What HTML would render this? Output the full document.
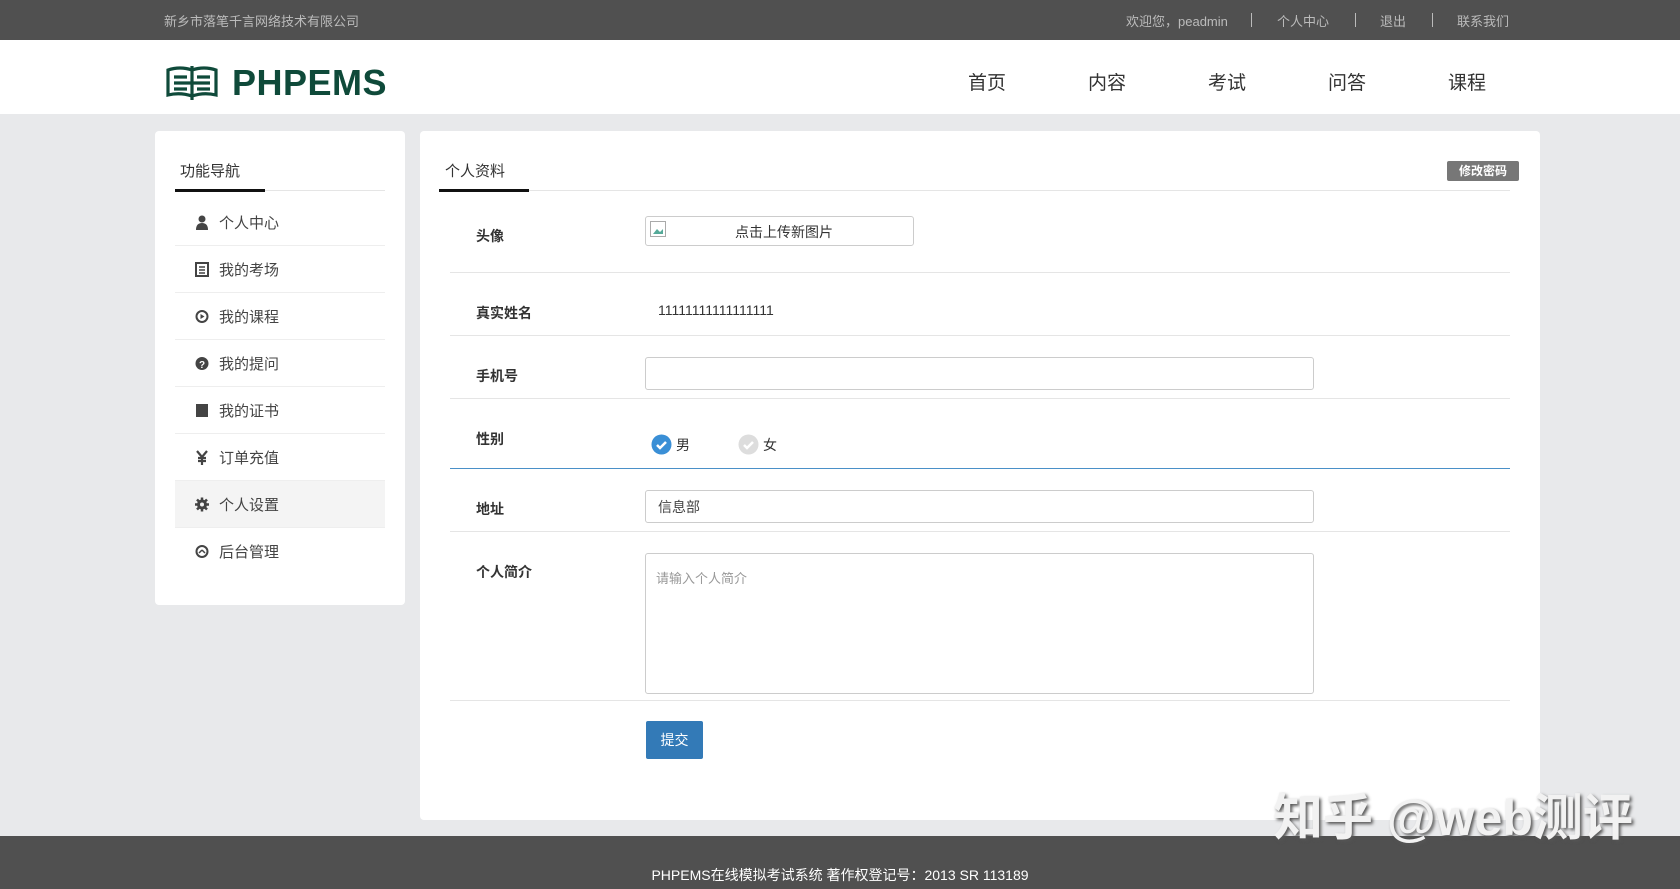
<!DOCTYPE html>
<html><head><meta charset="utf-8"><style>
*{margin:0;padding:0;box-sizing:border-box}
body{width:1680px;height:889px;background:#e8e9eb;font-family:"Liberation Sans","Noto Sans CJK SC",sans-serif;position:relative;overflow:hidden;color:#333}
.a{position:absolute}
.top{left:0;top:0;width:1680px;height:40px;background:#505050;color:#bbb;font-size:13px}
.top span{position:absolute;top:11px}
.sep{position:absolute;top:13px;width:1px;height:14px;background:#bbb}
.hdr{left:0;top:40px;width:1680px;height:74px;background:#fff}
.nav{position:absolute;top:28px;font-size:19px;color:#333;transform:translateX(-50%)}
.panel{background:#fff;border-radius:4px}
.mi{position:absolute;left:175px;width:210px;height:47px;border-bottom:1px solid #eee;font-size:15px;color:#444}
.mi svg{position:absolute;left:20px;top:16px}
.mi span{position:absolute;left:44px;top:13px}
.lbl{position:absolute;left:476px;font-size:14px;font-weight:bold;color:#333}
.hr{position:absolute;left:450px;width:1060px;height:1px;background:#e5e5e5}
.inp{position:absolute;left:645px;width:669px;height:33px;border:1px solid #ccc;border-radius:3px;background:#fff;font-size:14px}
</style></head><body>
<div class="a top">
<span style="left:164px">新乡市落笔千言网络技术有限公司</span>
<span style="left:1126px">欢迎您，peadmin</span><div class="sep" style="left:1251px"></div>
<span style="left:1277px">个人中心</span><div class="sep" style="left:1355px"></div>
<span style="left:1380px">退出</span><div class="sep" style="left:1432px"></div>
<span style="left:1457px">联系我们</span>
</div>
<div class="a hdr">
<svg class="a" style="left:166px;top:25px" width="52" height="35" viewBox="0 0 52 35" fill="none" stroke="#0f4a3a" stroke-width="3.2"><path d="M2 5 Q14 1 26 5 Q38 1 50 5 V30 Q38 27 26 31 Q14 27 2 30 Z M26 1V35 M8 12h13 M8 18h18 M8 24h13 M31 12h13 M26 18h18 M31 24h13"/></svg>
<div class="a" style="left:232px;top:25px;font-size:36px;line-height:36px;font-weight:bold;color:#0f4a3a;letter-spacing:0.5px">PHPEMS</div>
<span class="nav" style="left:987px">首页</span><span class="nav" style="left:1107px">内容</span><span class="nav" style="left:1227px">考试</span><span class="nav" style="left:1347px">问答</span><span class="nav" style="left:1467px">课程</span>
</div>
<div class="a panel" style="left:155px;top:131px;width:250px;height:474px"></div>
<div class="a" style="left:180px;top:160px;font-size:15px;color:#333">功能导航</div>
<div class="a" style="left:175px;top:190px;width:210px;height:1px;background:#e5e5e5"></div>
<div class="a" style="left:175px;top:189px;width:90px;height:3px;background:#111"></div>
<div class="mi" style="top:199px"><svg width="14" height="15"><circle cx="7" cy="4" r="3.5" fill="#444"/><path d="M1 15 Q1 8 7 8 Q13 8 13 15Z" fill="#444"/></svg><span>个人中心</span></div>
<div class="mi" style="top:246px"><svg width="14" height="15"><rect x="1" y="1" width="12" height="13" fill="none" stroke="#444" stroke-width="2"/><path d="M4 5h6M4 8h6M4 11h6" stroke="#444" stroke-width="1.5"/></svg><span>我的考场</span></div>
<div class="mi" style="top:293px"><svg width="14" height="15"><circle cx="7" cy="7.5" r="5.5" fill="none" stroke="#444" stroke-width="2"/><path d="M5.5 5v5l4-2.5z" fill="#444"/></svg><span>我的课程</span></div>
<div class="mi" style="top:340px"><svg width="14" height="15"><circle cx="7" cy="7.5" r="6.5" fill="#444"/><text x="4" y="12" font-size="10" font-weight="bold" fill="#fff">?</text></svg><span>我的提问</span></div>
<div class="mi" style="top:387px"><svg width="14" height="15"><rect x="1" y="1" width="12" height="13" fill="#444"/></svg><span>我的证书</span></div>
<div class="mi" style="top:434px"><svg width="14" height="15"><path d="M2 1l5 6 5-6M7 7v8M3 8h8M3 11h8" stroke="#444" stroke-width="2.2" fill="none"/></svg><span>订单充值</span></div>
<div class="mi" style="top:481px;background:#f4f4f4"><svg width="14" height="15"><circle cx="7" cy="7.5" r="5" fill="#444"/><path d="M7 0.5v14M0 7.5h14M2 2.5l10 10M12 2.5l-10 10" stroke="#444" stroke-width="2.5"/><circle cx="7" cy="7.5" r="2" fill="#f4f4f4"/></svg><span>个人设置</span></div>
<div class="mi" style="top:528px;border:none"><svg width="14" height="15"><circle cx="7" cy="7.5" r="5.5" fill="none" stroke="#444" stroke-width="2"/><path d="M4 9l3-3M7 6l3 3" stroke="#444" stroke-width="1.5"/></svg><span>后台管理</span></div>

<div class="a panel" style="left:420px;top:131px;width:1120px;height:689px"></div>
<div class="a" style="left:445px;top:160px;font-size:15px;color:#333">个人资料</div>
<div class="a" style="left:439px;top:190px;width:1071px;height:1px;background:#e5e5e5"></div>
<div class="a" style="left:439px;top:189px;width:90px;height:3px;background:#111"></div>
<div class="a" style="left:1447px;top:161px;width:72px;height:20px;background:#777;border-radius:2px;color:#fff;font-size:12px;font-weight:bold;text-align:center;line-height:20px">修改密码</div>

<div class="lbl" style="top:226px">头像</div>
<div class="a" style="left:645px;top:216px;width:269px;height:30px;border:1px solid #ccc;border-radius:3px;font-size:14px;color:#333"><svg class="a" style="left:4px;top:4px" width="16" height="16"><rect x="0.5" y="0.5" width="15" height="15" fill="#fff" stroke="#aaa"/><path d="M3 13l4-5 3 3 3-3v5z" fill="#5a9"/></svg><span class="a" style="left:89px;top:5px">点击上传新图片</span></div>
<div class="hr" style="top:272px"></div>
<div class="lbl" style="top:303px">真实姓名</div>
<div class="a" style="left:658px;top:302px;font-size:14px;color:#333">11111111111111111</div>
<div class="hr" style="top:335px"></div>
<div class="lbl" style="top:366px">手机号</div>
<div class="inp" style="top:357px"></div>
<div class="hr" style="top:398px"></div>
<div class="lbl" style="top:429px">性别</div>
<svg class="a" style="left:651px;top:434px" width="21" height="21"><circle cx="10.5" cy="10.5" r="10" fill="#3a8fd6"/><path d="M6 11l3 3 6-6" stroke="#fff" stroke-width="2.5" fill="none"/></svg>
<div class="a" style="left:676px;top:435px;font-size:14px">男</div>
<svg class="a" style="left:738px;top:434px" width="21" height="21"><circle cx="10.5" cy="10.5" r="10" fill="#ddd"/><path d="M6 11l3 3 6-6" stroke="#fff" stroke-width="2.5" fill="none"/></svg>
<div class="a" style="left:763px;top:435px;font-size:14px">女</div>
<div class="hr" style="top:468px;background:#4a90c8"></div>
<div class="lbl" style="top:499px">地址</div>
<div class="inp" style="top:490px;padding:6px 12px;color:#444">信息部</div>
<div class="hr" style="top:531px"></div>
<div class="lbl" style="top:562px">个人简介</div>
<div class="inp" style="top:553px;height:141px;padding:14px 10px;font-size:13px;color:#999">请输入个人简介</div>
<div class="hr" style="top:700px"></div>
<div class="a" style="left:646px;top:721px;width:57px;height:38px;background:#337ab7;border-radius:2px;color:#fff;font-size:14px;text-align:center;line-height:38px">提交</div>

<div class="a" style="left:0;top:836px;width:1680px;height:53px;background:#505050;color:#fff;font-size:14px;text-align:center;line-height:16px;padding-top:31px">PHPEMS在线模拟考试系统 著作权登记号：2013 SR 113189</div>
<div class="a" style="left:1273px;top:790px;font-size:50px;line-height:56px;font-weight:bold;color:#f2f2f2;text-shadow:2px 2px 3px #555;white-space:nowrap">知乎 @web测评</div>
</body></html>
